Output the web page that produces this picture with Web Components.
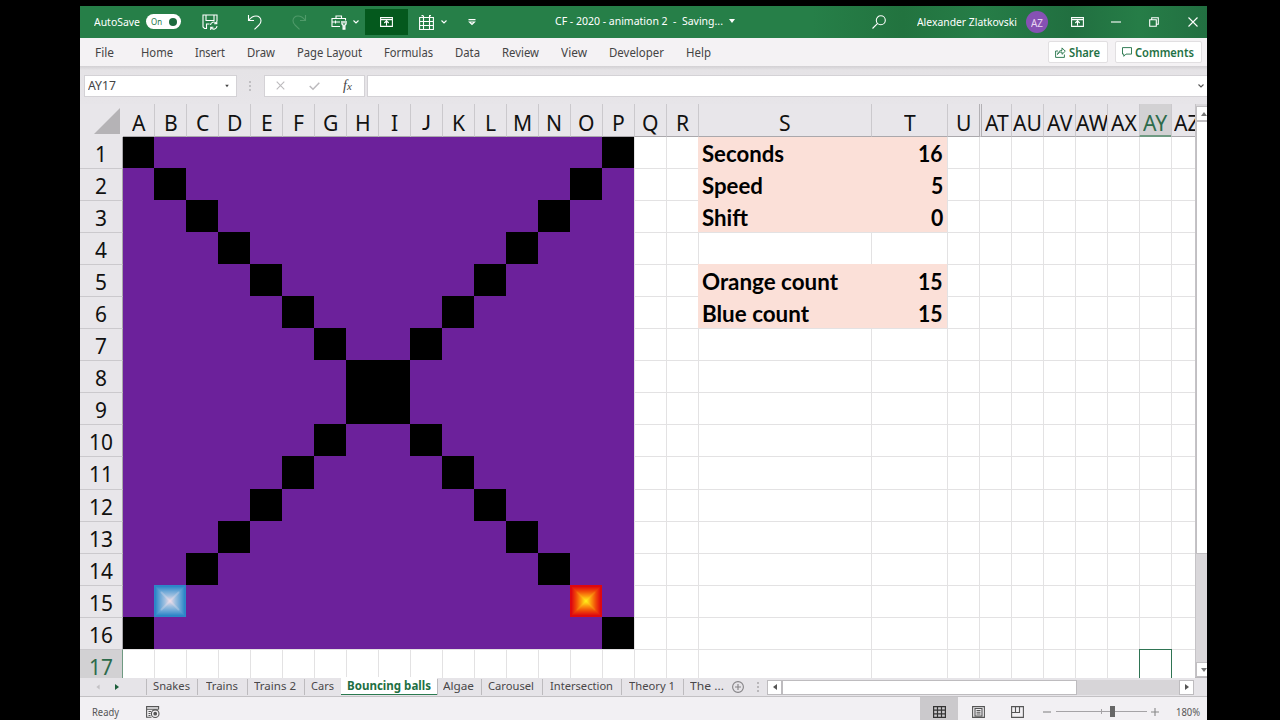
<!DOCTYPE html>
<html lang="en">
<head>
<meta charset="utf-8">
<title>CF - 2020 - animation 2</title>
<style>
    body {
        margin: 0;
        width: 1280px;
        height: 720px;
        overflow: hidden;
        background: #000;
        font-family: "Noto Sans", "Open Sans", sans-serif;
    }
</style>
</head>
<body>
<excel-window></excel-window>
<script>
// Text squeezed or stretched to a given width ("w") or by a factor ("scale")
class FitText extends HTMLElement {
    constructor() {
        super();
        this.attachShadow({ mode: 'open' });
        this.shadowRoot.innerHTML = `
            <style>
                :host { display: flex; flex: none; }
                span { display: block; flex: none; white-space: pre; transform-origin: 0 50%; }
            </style>
            <span><slot></slot></span>
        `;
    }
    connectedCallback() {
        const span = this.shadowRoot.querySelector('span');
        const natural = span.getBoundingClientRect().width;
        if (!natural) return;
        const w = this.hasAttribute('w')
            ? parseFloat(this.getAttribute('w'))
            : natural * parseFloat(this.getAttribute('scale') || 1);
        this.style.width = w + 'px';
        span.style.transform = `scaleX(${w / natural})`;
    }
}

const ICONS = {
    save: [16, 16, '<path d="M5 14.5H2.5L1 13V1h14v6M4 1v5.5h8V1M4.5 14.5V10h3"/><path d="M8.5 11a3.2 3.2 0 0 1 5.8-1.6M14.8 7v2.7h-2.7M15 12a3.2 3.2 0 0 1-5.8 1.8M8.7 16v-2.7h2.7"/>'],
    undo: [15, 16, '<path d="M1.5 1v5.5H7M1.8 6.2C4 3.4 6.2 2 9 2c3 0 5 2 5 4.7 0 1.8-.8 3-2 4.3l-4.5 4.3"/>'],
    redo: [15, 16, '<path d="M13.5 1v5.5H8M13.2 6.2C11 3.4 8.8 2 6 2 3 2 1 4 1 6.7c0 1.8.8 3 2 4.3l4.5 4.3"/>'],
    toolbox: [16, 14, '<path d="M9 11.5H1v-8h13.5v2M5 3.5V1h5.5v2.5M1 7h8M4.5 5.500v3"/><path d="M11 6v2.500c0 1 .7 1.500 1.200 1.700V14h1.600v-3.800c.7-.2 1.200-.7 1.200-1.700V6M13 6v2.500" stroke-width="1.400"/>'],
    chevron: [6, 4, '<path d="M.5.500 3 3 5.500.500"/>'],
    ribbon: [13, 10, '<path d="M.600.600h11.800v8.800H.600zM.600 2.600h11.800M6.500 8.500V4M4.300 6l2.200-2.200L8.700 6"/>'],
    table: [15, 15, '<path d="M.6 2.500h13.800v12H.6zM.6 6.500h13.800M.6 10.500h13.800M4.500 1v13.500M10.500 1v13.500M2.500 .6h2M10 .6h2"/>'],
    customize: [8, 6, '<path d="M.500.600h7M1.500 3 4 5.400 6.500 3z"/>'],
    search: [14, 14, '<circle cx="8.800" cy="5.200" r="4.500"/><path d="M5.600 8.400.500 13.500"/>'],
    restore: [10, 10, '<path d="M.700 2.700h6.600v6.600H.700zM2.700 2.500V.700h6.600v6.600H7.500"/>'],
    close: [10, 10, '<path d="m.500.500 9 9M9.500.500l-9 9"/>'],
    share: [11, 11, '<path d="M3 4H.600v6.400h8.800V7.500M2.500 7.500C3 5 4.500 3.500 7 3.300V.900l3.300 3.300L7 7.300V5C5 5 3.500 5.800 2.500 7.500z" stroke-width=".9"/>'],
    comment: [10, 10, '<path d="M.500.600h9v6.500H4L1.800 9.300V7.100H.500z" stroke-width=".9"/>'],
    cancel: [9, 9, '<path d="m.700.700 7.600 7.600M8.300.700.700 8.300"/>'],
    check: [11, 8, '<path d="M.700 4 4 7.200 10.300.700" stroke-width="1.500"/>'],
    plus: [12, 12, '<circle cx="6" cy="6" r="5.400"/><path d="M3 6h6M6 3v6"/>'],
    macro: [14, 12, '<path d="M5.500 11.300H.600V.600h12v3M.600 3.300h12M2.500 5.500h2.500M2.500 7.500h2M2.500 9.500h2"/><circle cx="9.200" cy="7.700" r="3.800"/><circle cx="9.200" cy="7.700" r="1.300" fill="currentColor"/>'],
    normal: [13, 12, '<path d="M.600.600h11.800v10.800H.600zM.600 4.200h11.800M.600 7.800h11.800M4.500.600v10.800M8.500.600v10.800" stroke-width="1.200"/>'],
    page: [13, 12, '<path d="M.600.600h11.800v10.800H.600zM3 2.500h7v7.500H3zM4.500 4.500h4M4.500 6.200h4M4.500 8h4"/>'],
    breaks: [13, 12, '<path d="M.600.600h11.800v10.800H.600zM.600 6.500h7.900V.600M4.500.600v5.900"/>'],
    minus: [8, 2, '<path d="M0 1h8"/>'],
    minimize: [10, 2, '<path d="M0 1h10"/>'],
    add: [8, 8, '<path d="M0 4h8M4 0v8"/>'],
    left: [4, 6, '<path d="M4 0v6L0 3z" fill="currentColor" stroke="none"/>'],
    right: [4, 6, '<path d="M0 0v6l4-3z" fill="currentColor" stroke="none"/>'],
    up: [6, 4, '<path d="M0 4h6L3 0z" fill="currentColor" stroke="none"/>'],
    down: [6, 4, '<path d="M0 0h6L3 4z" fill="currentColor" stroke="none"/>'],
    dots: [2, 10, '<path d="M1 0v2M1 4v2M1 8v2" stroke-width="1.500"/>']
};

class XlIcon extends HTMLElement {
    constructor() {
        super();
        this.attachShadow({ mode: 'open' });
    }
    connectedCallback() {
        const [w, h, body] = ICONS[this.getAttribute('name')];
        this.shadowRoot.innerHTML = `
            <style>
                :host { display: block; flex: none; width: ${w}px; height: ${h}px; }
                svg { display: block; overflow: visible; }
            </style>
            <svg width="${w}" height="${h}" viewBox="0 0 ${w} ${h}" fill="none" stroke="currentColor" stroke-width="1.1">${body}</svg>
        `;
    }
}

class TitleBar extends HTMLElement {
    constructor() {
        super();
        this.attachShadow({ mode: 'open' });
        this.shadowRoot.innerHTML = `
            <style>
                :host {
                    display: flex;
                    align-items: center;
                    height: 32px;
                    color: #fff;
                    font-size: 11px;
                    background: linear-gradient(90deg, #267f48 0 65%, #22733f 73%, #267d47 80%, #216f40 88%, #267d47 94%, #226f41);
                }
                .toggle {
                    box-sizing: border-box;
                    width: 35px;
                    height: 15px;
                    margin: -1px 0 0 6px;
                    padding: 0 4px 0 5px;
                    border-radius: 8px;
                    background: #fff;
                    color: #217346;
                    display: flex;
                    align-items: center;
                    justify-content: space-between;
                    font-size: 8.5px;
                }
                .toggle i { width: 8px; height: 8px; border-radius: 50%; background: #1c6b3e; }
                .active {
                    width: 43px;
                    height: 26px;
                    margin-left: 6px;
                    background: #04591d;
                    display: flex;
                    align-items: center;
                    justify-content: center;
                }
                .avatar {
                    width: 22px;
                    height: 22px;
                    margin-left: 9px;
                    border-radius: 50%;
                    background: #8651b4;
                    color: #e6d5f2;
                    display: flex;
                    align-items: center;
                    justify-content: center;
                }
            </style>
            <fit-text w="46" style="margin-left:14px;margin-top:-1px">AutoSave</fit-text>
            <div class="toggle"><fit-text w="11">On</fit-text><i></i></div>
            <xl-icon name="save" style="margin-left:21px"></xl-icon>
            <xl-icon name="undo" style="margin-left:29px"></xl-icon>
            <xl-icon name="redo" style="margin-left:30px;color:#4f9a69"></xl-icon>
            <xl-icon name="toolbox" style="margin-left:24px"></xl-icon>
            <xl-icon name="chevron" style="margin-left:6px"></xl-icon>
            <div class="active"><xl-icon name="ribbon"></xl-icon></div>
            <xl-icon name="table" style="margin-left:11px"></xl-icon>
            <xl-icon name="chevron" style="margin-left:7px"></xl-icon>
            <xl-icon name="customize" style="margin-left:21px"></xl-icon>
            <fit-text w="168" style="margin-left:79px;margin-top:-3px">CF - 2020 - animation 2  -  Saving...</fit-text>
            <xl-icon name="down" style="margin-left:6px;margin-top:-3px"></xl-icon>
            <xl-icon name="search" style="margin-left:137px"></xl-icon>
            <fit-text w="100" style="margin-left:31px;margin-top:-1px">Alexander Zlatkovski</fit-text>
            <div class="avatar"><fit-text w="12">AZ</fit-text></div>
            <xl-icon name="ribbon" style="margin-left:23px"></xl-icon>
            <xl-icon name="minimize" style="margin-left:27px"></xl-icon>
            <xl-icon name="restore" style="margin-left:28px"></xl-icon>
            <xl-icon name="close" style="margin-left:29px"></xl-icon>
        `;
    }
}

class RibbonTabs extends HTMLElement {
    constructor() {
        super();
        this.attachShadow({ mode: 'open' });
        const tabs = [['File', 19], ['Home', 32], ['Insert', 30], ['Draw', 28], ['Page Layout', 65], ['Formulas', 49],
            ['Data', 25], ['Review', 37], ['View', 26], ['Developer', 55], ['Help', 25]];
        this.shadowRoot.innerHTML = `
            <style>
                :host {
                    display: flex;
                    align-items: center;
                    box-sizing: border-box;
                    height: 28px;
                    padding: 0 5px 0 15px;
                    background: #f4f2f4;
                    color: #444;
                    font-size: 12px;
                }
                nav { display: flex; gap: 22px; flex: 1; }
                nav fit-text:first-child { margin-right: 5px; }
                .btn {
                    box-sizing: border-box;
                    height: 22px;
                    margin-left: 7px;
                    border: 1px solid #e1dfe1;
                    border-radius: 2px;
                    background: #fff;
                    color: #1f7145;
                    font-weight: 600;
                    display: flex;
                    align-items: center;
                    justify-content: center;
                    gap: 3px;
                    padding-right: 1px;
                }
            </style>
            <nav>${tabs.map(([t, w]) => `<fit-text w="${w}">${t}</fit-text>`).join('')}</nav>
            <div class="btn" style="width:60px"><xl-icon name="share"></xl-icon><fit-text w="31">Share</fit-text></div>
            <div class="btn" style="width:87px"><xl-icon name="comment"></xl-icon><fit-text w="59">Comments</fit-text></div>
        `;
    }
}

class FormulaBar extends HTMLElement {
    constructor() {
        super();
        this.attachShadow({ mode: 'open' });
        this.shadowRoot.innerHTML = `
            <style>
                :host {
                    display: flex;
                    align-items: center;
                    box-sizing: border-box;
                    height: 38px;
                    padding: 1px 0 0 4px;
                    background: linear-gradient(#d2d0d3, #e5e3e6 4px, #e7e5e9);
                }
                .box {
                    box-sizing: border-box;
                    height: 22px;
                    background: #fff;
                    border: 1px solid #d4d2d6;
                    display: flex;
                    align-items: center;
                }
                .name { width: 153px; padding: 0 6px 0 3px; justify-content: space-between; font-size: 12px; color: #444; }
                .buttons { width: 101px; margin-left: 13px; padding-left: 11px; color: #bcbabd; }
                .fx { margin-left: 23px; color: #444; font: italic 14px "Liberation Serif", serif; }
                .fx small { font-size: 11px; }
                .input { flex: 1; margin-left: 2px; justify-content: flex-end; border-right: 0; padding-right: 3px; color: #555; }
            </style>
            <div class="box name"><fit-text w="28">AY17</fit-text><xl-icon name="down" style="transform:scale(.6)"></xl-icon></div>
            <xl-icon name="dots" style="margin-left:12px;color:#b4b2b6"></xl-icon>
            <div class="box buttons">
                <xl-icon name="cancel"></xl-icon>
                <xl-icon name="check" style="margin-left:24px"></xl-icon>
                <span class="fx">f<small>x</small></span>
            </div>
            <div class="box input"><xl-icon name="chevron"></xl-icon></div>
        `;
    }
}

// A ball cell: concentric square rings fading towards the middle
class BallCell extends HTMLElement {
    constructor() {
        super();
        this.attachShadow({ mode: 'open' });
    }
    connectedCallback() {
        const blue = this.getAttribute('color') === 'blue';
        const stops = blue
            ? [[45, 134, 200], [105, 166, 214], [160, 192, 224], [232, 218, 230]]
            : [[222, 8, 16], [240, 72, 8], [252, 150, 14], [255, 236, 24]];
        const rings = [];
        for (let i = 0; i < 16; i++) {
            const t = Math.max(0, (i - 1) / 14) * 3;
            const k = Math.min(2, Math.floor(t));
            const rgb = stops[k].map((c, n) => Math.round(c + (stops[k + 1][n] - c) * (t - k)));
            rings.push(`inset 0 0 0 ${i + 1}px rgb(${rgb})`);
        }
        this.shadowRoot.innerHTML = `
            <style>
                :host { display: block; width: 100%; height: 100%; box-shadow: ${rings.join(',')}; }
                svg { display: block; width: 100%; height: 100%; }
            </style>
            <svg viewBox="0 0 32 32"><path d="M7 7 25 25M25 7 7 25" stroke="${blue ? '#f0e4ee' : '#ffd820'}" stroke-width="2" opacity="${blue ? 0.22 : 0.1}"/></svg>
        `;
    }
}

const COLUMNS = [...'ABCDEFGHIJKLMNOPQRSTU', 'AT', 'AU', 'AV', 'AW', 'AX', 'AY', 'AZ'];
const ROWS = 17;
const VALUES = {
    S1: 'Seconds', T1: '16', S2: 'Speed', T2: '5', S3: 'Shift', T3: '0',
    S5: 'Orange count', T5: '15', S6: 'Blue count', T6: '15'
};
const WIDTHS = { S1: 82, S2: 61, S3: 46, S5: 136, S6: 107 };

class SheetGrid extends HTMLElement {
    constructor() {
        super();
        this.attachShadow({ mode: 'open' });
        this.shadowRoot.innerHTML = `
            <style>
                :host {
                    display: grid;
                    width: 1115px;
                    height: 574px;
                    overflow: hidden;
                    grid-template-columns: 43px 31px repeat(17, 32px) 173px 76px repeat(7, 32px) 24px;
                    grid-template-rows: 33px 31.05px repeat(16, 32.05px);
                    background: #fff;
                }
                div { box-sizing: border-box; min-width: 0; overflow: hidden; }
                .col, .row, .corner {
                    display: flex;
                    align-items: center;
                    justify-content: center;
                    background: #e8e6ea;
                    color: #111;
                    font-size: 22px;
                    line-height: 26px;
                }
                .col { border-left: 1px solid #cbc9cd; border-bottom: 1px solid #aaa8ac; padding-top: 4px; }
                .row { border-top: 1px solid #cbc9cd; border-right: 1px solid #a9a7ab; padding-top: 1px; }
                .col.on { background: #d2d1d3; color: #2d6b4b; border-bottom: 2px solid #6f9a82; padding-top: 5px; }
                .col.left { justify-content: flex-start; }
                .col.gap { border-left: 3px double #b3b1b5; }
                .row.on { background: #d2d1d3; color: #2d6b4b; border-right-color: #6f9a82; }
                .corner { align-items: flex-end; justify-content: flex-end; padding: 0 3px 3px 0; }
                .first-col { border-left: 0; }
                .first-row { border-top: 0; }
                .cell { border-left: 1px solid #e3e2e3; border-top: 1px solid #e3e2e3; }
                .cell.first-col { border-left: 0; }
                .cell.first-row { border-top: 0; }
                .purple { background: #6c219b; }
                .black { background: #000; }
                .cell.peach {
                    display: flex;
                    align-items: center;
                    border-color: #fbe0d8;
                    background: #fbe0d8;
                    color: #000;
                    padding: 1px 4px 0 3px;
                    font: bold 22.5px "Lato", "Open Sans", sans-serif;
                }
                .cell.right { justify-content: flex-end; }
                .cell.ay17 { border: 1px solid #2f7453; border-bottom: 0; margin-right: -1px; z-index: 1; }
            </style>
            ${this.cells()}
        `;
    }
    cells() {
        let html = `<div class="corner"><svg width="26" height="26"><path d="M26 0V26H0z" fill="#b5b3b6"/></svg></div>`;
        html += COLUMNS.map((c, i) => {
            const cls = ['col'];
            if (i === 0) cls.push('first-col');
            if (c === 'AY') cls.push('on');
            if (c === 'AT') cls.push('gap');
            if (c === 'AW' || c === 'AZ') cls.push('left');
            let style = '';
            if (c === 'J') style = ' style="font-family:Lato"';
            if (c === 'AZ') style = ' style="margin-left:2px"';
            return `<div class="${cls.join(' ')}"><fit-text scale="0.96"${style}>${c}</fit-text></div>`;
        }).join('');
        for (let r = 1; r <= ROWS; r++) {
            html += `<div class="row${r === 17 ? ' on' : ''}${r === 1 ? ' first-row' : ''}"><fit-text scale="0.95">${r}</fit-text></div>`;
            COLUMNS.forEach((name, i) => {
                html += this.cell(name, i + 1, r);
            });
        }
        return html;
    }
    cell(name, c, r) {
        const key = name + r;
        if (c <= 16 && r <= 16) {
            if (key === 'B15') return '<div><ball-cell color="blue"></ball-cell></div>';
            if (key === 'O15') return '<div><ball-cell color="orange"></ball-cell></div>';
            const diagonal = c === r || c === 17 - r || ((r === 8 || r === 9) && (c === 8 || c === 9));
            return `<div class="${diagonal ? 'black' : 'purple'}"></div>`;
        }
        const cls = ['cell'];
        if (c === 1) cls.push('first-col');
        if (r === 1) cls.push('first-row');
        if (key === 'AY17') cls.push('ay17');
        if (!VALUES[key]) return `<div class="${cls.join(' ')}"></div>`;
        const text = VALUES[key];
        cls.push('peach');
        if (name === 'T') cls.push('right');
        const w = name === 'S' ? WIDTHS[key] : text.length * 12.3;
        return `<div class="${cls.join(' ')}"><fit-text w="${w}">${text}</fit-text></div>`;
    }
}

class VerticalScroll extends HTMLElement {
    constructor() {
        super();
        this.attachShadow({ mode: 'open' });
        this.shadowRoot.innerHTML = `
            <style>
                :host {
                    display: flex;
                    flex-direction: column;
                    box-sizing: border-box;
                    width: 12px;
                    padding-top: 2px;
                    background: #d9d7da;
                    border-left: 1px solid #c5c3c6;
                    color: #777;
                    overflow: hidden;
                }
                div { box-sizing: border-box; background: #fff; border: 1px solid #c1bfc2; border-right: 0; }
                .btn { height: 15px; padding-left: 4px; display: flex; align-items: center; }
                .thumb { height: 433px; }
                .track { flex: 1; background: none; border: 0; }
            </style>
            <div class="btn"><xl-icon name="up"></xl-icon></div>
            <div class="thumb"></div>
            <div class="track"></div>
            <div class="btn"><xl-icon name="down"></xl-icon></div>
        `;
    }
}

class SheetTabs extends HTMLElement {
    constructor() {
        super();
        this.attachShadow({ mode: 'open' });
        // [label, tab width, text width]
        const tabs = [['Snakes', 51, 37], ['Trains', 50, 32], ['Trains 2', 57, 42], ['Cars', 37, 23], ['Bouncing balls', 96, 84],
            ['Algae', 44, 31], ['Carousel', 61, 46], ['Intersection', 79, 63], ['Theory 1', 62, 46], ['The ...', 49, 34]];
        this.shadowRoot.innerHTML = `
            <style>
                :host {
                    display: flex;
                    align-items: center;
                    box-sizing: border-box;
                    height: 20px;
                    border-top: 1px solid #b9b7ba;
                    border-bottom: 1px solid #c3c1c4;
                    background: #e6e4e8;
                    color: #494749;
                    font-size: 11.5px;
                }
                .nav { width: 66px; display: flex; align-items: center; }
                .tab {
                    box-sizing: border-box;
                    height: 16px;
                    border-left: 1px solid #bdbbbe;
                    display: flex;
                    align-items: center;
                    justify-content: center;
                    padding: 0 2px 4px 0;
                }
                .tab.on {
                    height: 18px;
                    margin-top: -1px;
                    align-self: flex-start;
                    background: #fff;
                    color: #1e6f43;
                    font-weight: bold;
                    border-left: 0;
                    border-bottom: 1px solid #2b7a50;
                    padding: 0 1px 0 0;
                }
                .bar { display: flex; height: 15px; width: 427px; margin-left: 8px; background: #d7d5d8; color: #555; }
                .bar div { box-sizing: border-box; height: 15px; background: #fff; border: 1px solid #bebcbf; }
                .bar .btn { width: 15px; display: flex; align-items: center; justify-content: center; }
            </style>
            <div class="nav">
                <xl-icon name="left" style="margin-left:16px;color:#c3c1c4;transform:scale(.8)"></xl-icon>
                <xl-icon name="right" style="margin-left:15px;color:#1d5f3b"></xl-icon>
            </div>
            ${tabs.map(([t, w, tw]) => `<div class="tab${w === 96 ? ' on' : ''}" style="width:${w}px"><fit-text w="${tw}">${t}</fit-text></div>`).join('')}
            <xl-icon name="plus" style="color:#858386"></xl-icon>
            <xl-icon name="dots" style="margin-left:13px;color:#aaa8ab"></xl-icon>
            <div class="bar">
                <div class="btn"><xl-icon name="left"></xl-icon></div>
                <div style="width:295px"></div>
                <div class="btn" style="margin-left:auto"><xl-icon name="right"></xl-icon></div>
            </div>
        `;
    }
}

class StatusBar extends HTMLElement {
    constructor() {
        super();
        this.attachShadow({ mode: 'open' });
        this.shadowRoot.innerHTML = `
            <style>
                :host {
                    display: flex;
                    align-items: center;
                    box-sizing: border-box;
                    height: 23px;
                    padding: 6px 0 0 12px;
                    background: #f2f0f3;
                    color: #555;
                    font-size: 10px;
                }
                .view {
                    width: 38px;
                    height: 23px;
                    margin: -6px 0 0 auto;
                    background: #cbc9cc;
                    color: #333;
                    display: flex;
                    align-items: center;
                    justify-content: center;
                    padding-top: 6px;
                    box-sizing: border-box;
                }
                .slider { width: 91px; margin-left: 5px; display: flex; align-items: center; }
                .slider i { height: 1px; background: #a5a3a6; }
                .slider .tick { width: 1px; height: 5px; }
                .slider .thumb { width: 5px; height: 11px; background: #666; }
            </style>
            <fit-text w="27">Ready</fit-text>
            <xl-icon name="macro" style="margin-left:27px"></xl-icon>
            <div class="view"><xl-icon name="normal"></xl-icon></div>
            <xl-icon name="page" style="margin-left:14px"></xl-icon>
            <xl-icon name="breaks" style="margin-left:26px"></xl-icon>
            <xl-icon name="minus" style="margin-left:19px;color:#888"></xl-icon>
            <div class="slider">
                <i style="width:45px"></i><i class="tick"></i><i style="width:8px"></i><i class="thumb"></i><i style="width:32px"></i>
            </div>
            <xl-icon name="add" style="margin-left:4px;color:#888"></xl-icon>
            <fit-text w="24" style="margin:0 7px 0 17px">180%</fit-text>
        `;
    }
}

class ExcelWindow extends HTMLElement {
    constructor() {
        super();
        this.attachShadow({ mode: 'open' });
        this.shadowRoot.innerHTML = `
            <style>
                :host {
                    display: block;
                    width: 1127px;
                    height: 714px;
                    margin: 6px 0 0 80px;
                    overflow: hidden;
                }
                main { display: flex; height: 573px; }
            </style>
            <title-bar></title-bar>
            <ribbon-tabs></ribbon-tabs>
            <formula-bar></formula-bar>
            <main>
                <sheet-grid></sheet-grid>
                <vertical-scroll></vertical-scroll>
            </main>
            <sheet-tabs></sheet-tabs>
            <status-bar></status-bar>
        `;
    }
}

customElements.define('fit-text', FitText);
customElements.define('xl-icon', XlIcon);
customElements.define('title-bar', TitleBar);
customElements.define('ribbon-tabs', RibbonTabs);
customElements.define('formula-bar', FormulaBar);
customElements.define('ball-cell', BallCell);
customElements.define('sheet-grid', SheetGrid);
customElements.define('vertical-scroll', VerticalScroll);
customElements.define('sheet-tabs', SheetTabs);
customElements.define('status-bar', StatusBar);
customElements.define('excel-window', ExcelWindow);
</script>
</body>
</html>
